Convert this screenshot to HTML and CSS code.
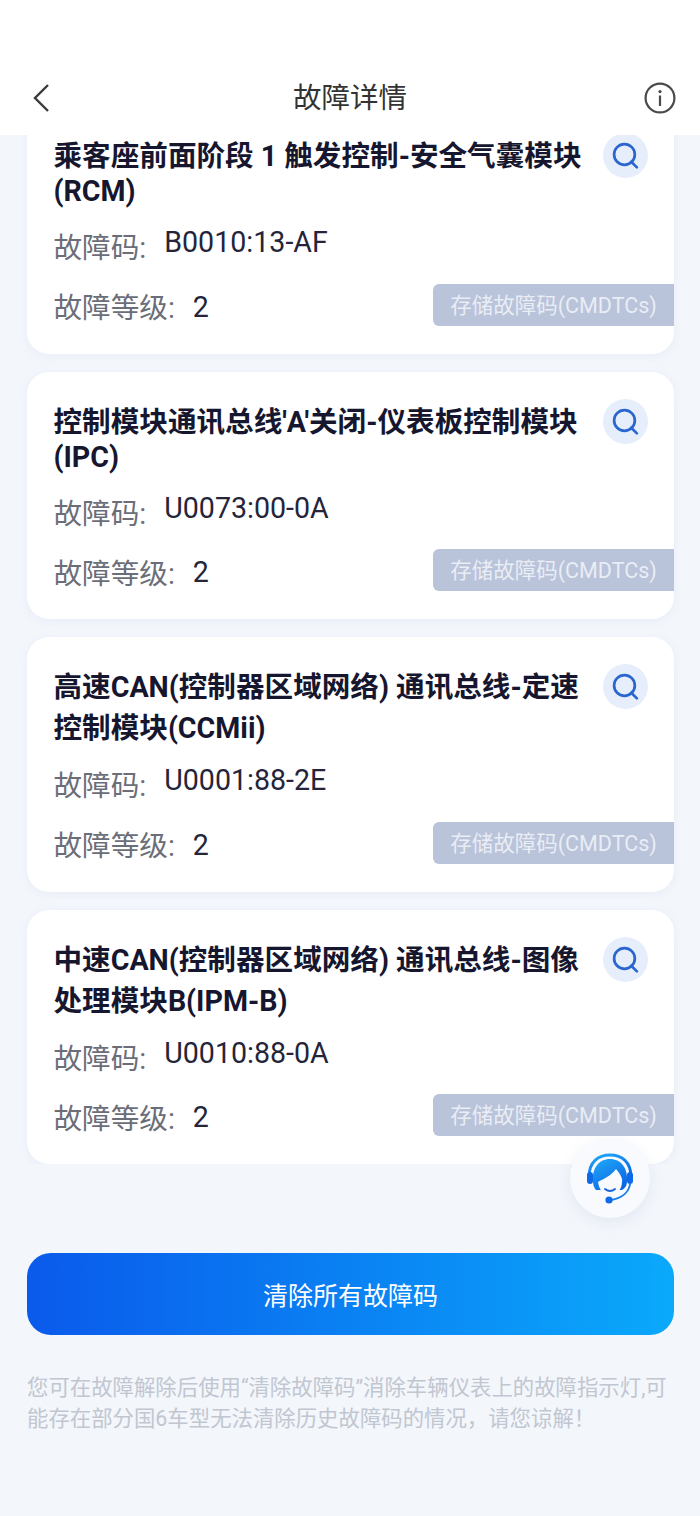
FILE: index.html
```html
<!DOCTYPE html>
<html lang="zh-CN">
<head>
<meta charset="utf-8">
<title>故障详情</title>
<link rel="stylesheet" href="styles.css">
</head>
<body>
<div class="page">
  <header class="header">
    <svg class="back" width="18" height="30" viewBox="0 0 18 30"><path d="M16 2 L3 15 L16 28" fill="none" stroke="#3a3a3a" stroke-width="2.4"/></svg>
    <h1 class="heading">故障详情</h1>
    <svg class="info" width="32" height="32" viewBox="0 0 32 32"><circle cx="16" cy="16" r="14.4" fill="none" stroke="#4a4a4a" stroke-width="2.2"/><circle cx="16" cy="9.6" r="1.6" fill="#4a4a4a"/><path d="M16 13.5V24" stroke="#4a4a4a" stroke-width="2.2"/></svg>
  </header>
  <main class="viewport">
    <div class="list">
      <article class="card">
        <div class="title-row"><h2 class="title">乘客座前面阶段 1 触发控制-安全气囊模块(RCM)</h2><span class="search"><svg width="29" height="29" viewBox="0 0 28 28"><circle cx="13" cy="13" r="10" fill="none" stroke="#2a66cf" stroke-width="2.6"/><path d="M19.5 20 L25 25.5" stroke="#2a66cf" stroke-width="2.6" stroke-linecap="round"/></svg></span></div>
        <div class="code-row"><span class="label">故障码:</span><span class="value">B0010:13-AF</span></div>
        <div class="level-row"><span class="label">故障等级:</span><span class="value level">2</span><span class="tag">存储故障码(CMDTCs)</span></div>
      </article>
      <article class="card">
        <div class="title-row"><h2 class="title">控制模块通讯总线'A'关闭-仪表板控制模块(IPC)</h2><span class="search"><svg width="29" height="29" viewBox="0 0 28 28"><circle cx="13" cy="13" r="10" fill="none" stroke="#2a66cf" stroke-width="2.6"/><path d="M19.5 20 L25 25.5" stroke="#2a66cf" stroke-width="2.6" stroke-linecap="round"/></svg></span></div>
        <div class="code-row"><span class="label">故障码:</span><span class="value">U0073:00-0A</span></div>
        <div class="level-row"><span class="label">故障等级:</span><span class="value level">2</span><span class="tag">存储故障码(CMDTCs)</span></div>
      </article>
      <article class="card">
        <div class="title-row"><h2 class="title">高速CAN(控制器区域网络) 通讯总线-定速控制模块(CCMii)</h2><span class="search"><svg width="29" height="29" viewBox="0 0 28 28"><circle cx="13" cy="13" r="10" fill="none" stroke="#2a66cf" stroke-width="2.6"/><path d="M19.5 20 L25 25.5" stroke="#2a66cf" stroke-width="2.6" stroke-linecap="round"/></svg></span></div>
        <div class="code-row"><span class="label">故障码:</span><span class="value">U0001:88-2E</span></div>
        <div class="level-row"><span class="label">故障等级:</span><span class="value level">2</span><span class="tag">存储故障码(CMDTCs)</span></div>
      </article>
      <article class="card">
        <div class="title-row"><h2 class="title">中速CAN(控制器区域网络) 通讯总线-图像处理模块B(IPM-B)</h2><span class="search"><svg width="29" height="29" viewBox="0 0 28 28"><circle cx="13" cy="13" r="10" fill="none" stroke="#2a66cf" stroke-width="2.6"/><path d="M19.5 20 L25 25.5" stroke="#2a66cf" stroke-width="2.6" stroke-linecap="round"/></svg></span></div>
        <div class="code-row"><span class="label">故障码:</span><span class="value">U0010:88-0A</span></div>
        <div class="level-row"><span class="label">故障等级:</span><span class="value level">2</span><span class="tag">存储故障码(CMDTCs)</span></div>
      </article>
    </div>
  </main>
  <button class="clear">清除所有故障码</button>
  <p class="note">您可在故障解除后使用“清除故障码”消除车辆仪表上的故障指示灯,可能存在部分国6车型无法清除历史故障码的情况，请您谅解！</p>
  <div class="helper">
    <svg width="60" height="60" viewBox="0 0 60 60">
      <defs><linearGradient id="hg" x1="0.2" y1="0" x2="0.8" y2="1"><stop offset="0" stop-color="#1ea4f6"/><stop offset="1" stop-color="#0c62e6"/></linearGradient></defs>
      <path d="M9 29 C9 14 18 7 30 7 C42 7 51 14 51 29" fill="none" stroke="url(#hg)" stroke-width="2.8"/>
      <path d="M13 33 C12 20 19 11 30 11 C41 11 48 20 47 33 C47 38 45 40 42 42 L16 42 C14 40 13 37 13 33 Z" fill="url(#hg)"/>
      <path d="M18 34 C23 31 31 28 36 21 C40 26 43 30 42 34 C42 42 36 47 30 47 C24 47 19 42 18 34 Z" fill="#f8fafe"/>
      <rect x="7" y="24" width="6" height="12" rx="3" fill="#0f6ae8"/>
      <rect x="47" y="24" width="6" height="12" rx="3" fill="#0f6ae8"/>
      <path d="M25 41 Q30 45 35 41" fill="none" stroke="#1a66dd" stroke-width="2" stroke-linecap="round"/>
      <path d="M50 36 C49 44 42 50 31 52" fill="none" stroke="#1a7ff0" stroke-width="2"/>
      <circle cx="29" cy="52" r="3.6" fill="#0f6ae8"/>
    </svg>
  </div>
</div>
</body>
</html>
```
FILE: styles.css
```css
* { box-sizing: border-box; }
html, body { margin: 0; padding: 0; }
body { font-family: Roboto, "Noto Sans CJK SC", sans-serif; background: #f3f6fb; }
.page { position: relative; width: 700px; height: 1516px; overflow: hidden; background: #f3f6fb; }
.header { height: 135px; background: #fff; padding: 60px 24px 0 32px; display: flex; align-items: center; justify-content: space-between; }
.back { flex: none; }
.heading { margin: 2px 0 0 6px; font-size: 28.5px; font-weight: 400; color: #333; line-height: 56px; }
.info { flex: none; }
.viewport { height: 1029px; overflow: hidden; padding: 0 26px 0 27px; }
.list { display: flex; flex-direction: column; gap: 18px; margin-top: -29px; }
.card { position: relative; background: #fff; border-radius: 22px; padding: 27px 0 27.5px 26.5px; box-shadow: 0 2px 8px rgba(190,200,225,.18); }
.title-row { display: flex; align-items: flex-start; }
.title { margin: 0; width: 530.5px; font-size: 28.6px; font-weight: 700; color: #16172f; }
.search { flex: none; width: 45px; height: 45px; border-radius: 50%; background: #e6eefb; display: flex; align-items: center; justify-content: center; margin: 0 0 0 19px; }
.code-row { display: flex; align-items: flex-start; margin-top: 17px; }
.label { font-size: 28.6px; color: #6b6e78; flex: none; }
.value { font-size: 28.6px; color: #24253a; margin-left: 18px; }
.code-row .value { margin-top: 0; }
.level-row { display: flex; align-items: center; margin-top: 19px; }
.level { margin: 2px 0 0 18px; }
.tag { margin: -2px 0 0 auto; width: 241px; height: 42px; padding-bottom: 3px; background: #b9c3d9; border-radius: 6px 0 0 6px; color: #e9edf5; font-size: 21.5px; display: flex; align-items: center; justify-content: center; }
.clear { display: block; width: 647px; height: 82px; margin: 89px 0 0 27px; border: 0; border-radius: 24px; background: linear-gradient(90deg, #0a5aeb, #0aa9fb); color: #fff; font: 400 25px Roboto, "Noto Sans CJK SC", sans-serif; }
.note { margin: 37px 26px 0 27px; font-size: 21.4px; line-height: 31px; color: #c1c6d1; }
.helper { position: absolute; left: 570px; top: 1138px; width: 80px; height: 80px; border-radius: 50%; background: #f8fafe; box-shadow: 0 4px 14px rgba(190,200,225,.3); display: flex; align-items: center; justify-content: center; }
```
